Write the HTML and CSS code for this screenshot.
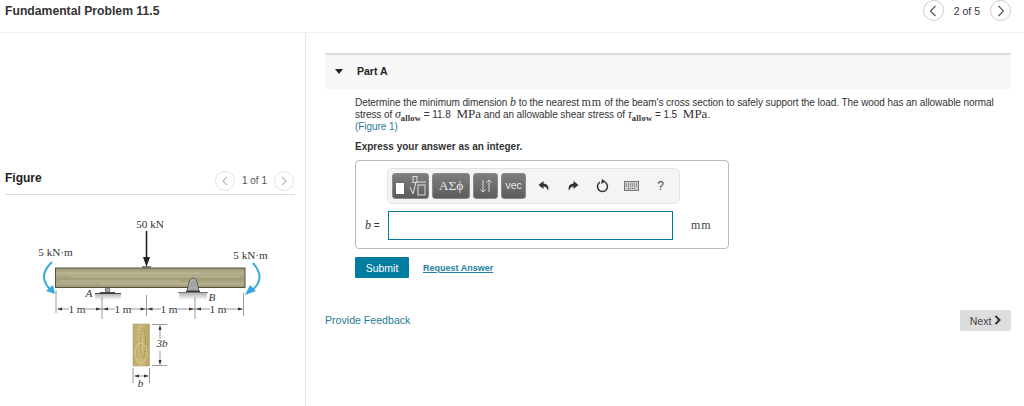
FILE: index.html
```html
<!DOCTYPE html>
<html lang="en">
<head>
    <meta charset="UTF-8">
    <title>Fundamental Problem 11.5</title>
    <link rel="stylesheet" href="styles.css">
</head>
<body>
    <header class="top-bar">
        <h1>Fundamental Problem 11.5</h1>
        <div class="pager">
            <span class="circle">
                <svg width="8" height="12" viewBox="0 0 8 12"><path d="M6.5 1 L1.5 6 L6.5 11" /></svg>
            </span>
            <span class="pager-text">2 of 5</span>
            <span class="circle">
                <svg width="8" height="12" viewBox="0 0 8 12"><path d="M1.5 1 L6.5 6 L1.5 11" /></svg>
            </span>
        </div>
    </header>

    <main class="columns">
        <!-- Figure pane -->
        <section class="figure-pane">
            <div class="figure-head">
                <h2>Figure</h2>
                <div class="pager small">
                    <span class="circle faded">
                        <svg width="8" height="12" viewBox="0 0 8 12"><path d="M6 2 L2 6 L6 10" /></svg>
                    </span>
                    <span class="pager-text">1 of 1</span>
                    <span class="circle faded">
                        <svg width="8" height="12" viewBox="0 0 8 12"><path d="M2 2 L6 6 L2 10" /></svg>
                    </span>
                </div>
            </div>
            <svg class="beam-figure" width="305" height="211" viewBox="0 195 305 211">
                <defs>
                    <linearGradient id="wood" x1="0" y1="0" x2="0" y2="1">
                        <stop offset="0" stop-color="#a09b76" />
                        <stop offset="0.3" stop-color="#b5b08e" />
                        <stop offset="0.55" stop-color="#a29d78" />
                        <stop offset="0.8" stop-color="#b0ab89" />
                        <stop offset="1" stop-color="#9b9671" />
                    </linearGradient>
                    <linearGradient id="grain" x1="0" y1="0" x2="1" y2="0">
                        <stop offset="0" stop-color="#bda869" />
                        <stop offset="0.5" stop-color="#cdbb80" />
                        <stop offset="1" stop-color="#b7a260" />
                    </linearGradient>
                    <linearGradient id="ground" x1="0" y1="0" x2="0" y2="1">
                        <stop offset="0" stop-color="#b5b5b5" />
                        <stop offset="1" stop-color="#fff" />
                    </linearGradient>
                </defs>

                <text class="fig-label" x="150" y="228" text-anchor="middle">50 kN</text>
                <text class="fig-label" x="55.5" y="256" text-anchor="middle">5 kN·m</text>
                <text class="fig-label" x="250.5" y="258.5" text-anchor="middle">5 kN·m</text>

                <!-- load arrow -->
                <rect x="142" y="266" width="9" height="2.5" fill="#8b8b80" />
                <path d="M146.5 231 V258" stroke="#222" stroke-width="1.6" fill="none" />
                <path d="M143 257 L150 257 L146.5 267 Z" fill="#222" />

                <!-- beam -->
                <rect x="55.5" y="268" width="189.5" height="19.5" fill="url(#wood)" stroke="#55533f" stroke-width="1" />
                <path d="M58 273 H200 M70 277 H240 M60 281 H180 M100 284 H243" stroke="#c4bf9f" stroke-width="0.7" fill="none" />

                <!-- moment arrows -->
                <path d="M52 262 Q36 277 52 291" stroke="#35a7dc" stroke-width="2" fill="none" />
                <path d="M55 294 L46 291 L53 285 Z" fill="#35a7dc" />
                <path d="M253 263 Q267 279 251 291" stroke="#35a7dc" stroke-width="2" fill="none" />
                <path d="M245 295 L250 285 L256 291 Z" fill="#35a7dc" />

                <!-- support A -->
                <circle cx="107.5" cy="290" r="2.3" fill="#aaa" stroke="#444" stroke-width="0.7" />
                <rect x="100" y="292" width="15" height="1.5" fill="#444" />
                <path d="M95 293.5 H121" stroke="#444" stroke-width="1" />
                <rect x="95" y="294" width="26" height="6" fill="url(#ground)" />
                <text class="fig-label italic" x="89" y="297" text-anchor="middle">A</text>

                <!-- support B -->
                <path d="M187 291 L189.5 280 Q193 276 196.5 280 L199 291 Z" fill="#a8a8a8" stroke="#444" stroke-width="0.7" />
                <circle cx="193" cy="284" r="1.2" fill="#eee" stroke="#444" stroke-width="0.5" />
                <path d="M186 291.5 H200" stroke="#333" stroke-width="1.4" />
                <path d="M178 292.5 H208" stroke="#777" stroke-width="1" />
                <rect x="179" y="293" width="28" height="7" fill="url(#ground)" />
                <text class="fig-label italic" x="212" y="301" text-anchor="middle">B</text>

                <!-- dimension line -->
                <g class="dim">
                    <path d="M56 290 V313 M102 297 V319 M146.5 295 V316 M195 297 V319 M243.5 293 V316" />
                    <path d="M58 309 H69 M85 309 H115 M131 309 H161 M177 309 H210 M226 309 H242" />
                </g>
                <g class="dim-head">
                    <path d="M57 309 L62 307.5 V310.5 Z M101 309 L96 307.5 V310.5 Z M103 309 L108 307.5 V310.5 Z M145.5 309 L140.5 307.5 V310.5 Z M147.5 309 L152.5 307.5 V310.5 Z M194 309 L189 307.5 V310.5 Z M196 309 L201 307.5 V310.5 Z M243 309 L238 307.5 V310.5 Z" />
                </g>
                <text class="fig-label" x="77" y="313" text-anchor="middle">1 m</text>
                <text class="fig-label" x="123" y="313" text-anchor="middle">1 m</text>
                <text class="fig-label" x="169" y="313" text-anchor="middle">1 m</text>
                <text class="fig-label" x="218" y="313" text-anchor="middle">1 m</text>

                <!-- cross section -->
                <rect x="133" y="324" width="16.5" height="42" fill="url(#grain)" stroke="#a89a68" stroke-width="0.5" />
                <ellipse cx="143" cy="343" rx="2.5" ry="15" fill="none" stroke="#8f7b3c" stroke-width="0.7" stroke-dasharray="2 1.5" />
                <ellipse cx="141" cy="353" rx="6" ry="10" fill="none" stroke="#e2d49a" stroke-width="0.7" />
                <g class="dim">
                    <path d="M152 324.5 H167 M152 365.5 H167 M133 368 V383 M149.5 368 V383" />
                    <path d="M160 326 V339 M160 351 V364 M135 376 H148" />
                </g>
                <g class="dim-head">
                    <path d="M160 325 L158.5 330 H161.5 Z M160 365 L158.5 360 H161.5 Z M134 376 L139 374.5 V377.5 Z M149 376 L144 374.5 V377.5 Z" />
                </g>
                <text class="fig-label italic" x="162" y="347" text-anchor="middle">3b</text>
                <text class="fig-label italic" x="140.5" y="387" text-anchor="middle">b</text>
            </svg>
        </section>

        <!-- Question pane -->
        <section class="question-pane">
            <div class="part-head">
                <span class="caret"></span>
                <h3>Part A</h3>
            </div>
            <div class="part-body">
                <p class="prompt">Determine the minimum dimension <i class="math">b</i> to the nearest <span class="math unit">mm</span> of the beam's cross section to safely support the load. The wood has an allowable normal<br>stress of <i class="math">σ</i><sub class="math">allow</sub> = 11.8 <span class="math unit big">MPa</span> and an allowable shear stress of <i class="math">τ</i><sub class="math">allow</sub> = 1.5 <span class="math unit big">MPa</span>.<br><a class="figure-link">(Figure 1)</a></p>
                <p class="hint">Express your answer as an integer.</p>

                <div class="answer-box">
                    <div class="toolbar">
                        <span class="tool wide">
                            <svg width="31" height="22" viewBox="0 0 31 22">
                                <rect x="1" y="8" width="8" height="11" fill="#fff" />
                                <rect x="18" y="1.5" width="4" height="6" fill="none" stroke="#ddd" stroke-width="1" />
                                <path d="M15 12 L18 19 L21 7 H31" fill="none" stroke="#ddd" stroke-width="1" />
                                <rect x="23" y="10" width="7" height="10" fill="none" stroke="#ddd" stroke-width="1" />
                            </svg>
                        </span>
                        <span class="tool greek">ΑΣϕ</span>
                        <span class="tool narrow">
                            <svg width="14" height="14" viewBox="0 0 14 14">
                                <path d="M4 1 V13 M1.5 10.5 L4 13 L6.5 10.5 M10 13 V1 M7.5 3.5 L10 1 L12.5 3.5" fill="none" stroke="#d8d8d8" stroke-width="1" />
                            </svg>
                        </span>
                        <span class="tool vec">vec</span>
                        <span class="plain-icons">
                            <svg width="12" height="12" viewBox="0 0 12 12"><path d="M5.5 1 L0.5 5 L5.5 9 V6.5 Q9 6.5 10 11 Q12 4 5.5 3.5 Z" fill="#333" /></svg>
                            <svg width="12" height="12" viewBox="0 0 12 12"><path d="M6.5 1 L11.5 5 L6.5 9 V6.5 Q3 6.5 2 11 Q0 4 6.5 3.5 Z" fill="#333" /></svg>
                            <svg width="13" height="14" viewBox="0 0 13 14"><path d="M4 3.2 A5 5 0 1 0 9 3.2" fill="none" stroke="#333" stroke-width="1.5" /><path d="M5.5 0 V5 L9.5 2 Z" fill="#333" transform="rotate(8 6 3)" /></svg>
                            <svg width="15" height="10" viewBox="0 0 15 10"><rect x="0.5" y="0.5" width="14" height="9" fill="#ccc" stroke="#777" /><path d="M2 3 H13 M2 5 H13 M4 7.5 H11" stroke="#666" stroke-width="1" stroke-dasharray="1 1" /></svg>
                            <span class="help">?</span>
                        </span>
                    </div>
                    <div class="answer-row">
                        <label class="answer-label"><i class="math">b</i> =</label>
                        <input class="answer-input" type="text">
                        <span class="math unit answer-unit">mm</span>
                    </div>
                </div>

                <div class="actions">
                    <button class="submit">Submit</button>
                    <a class="request">Request Answer</a>
                </div>
            </div>

            <div class="footer-row">
                <a class="feedback">Provide Feedback</a>
                <button class="next">Next <svg width="7" height="10" viewBox="0 0 7 10"><path d="M1.5 1 L5.5 5 L1.5 9" fill="none" stroke="#333" stroke-width="2" /></svg></button>
            </div>
        </section>
    </main>
</body>
</html>
```

FILE: styles.css
```css
* {
    box-sizing: border-box;
}

body {
    font-family: "Liberation Sans", Arial, sans-serif;
    margin: 0;
    padding: 0;
    background-color: #fff;
    color: #333;
    font-size: 10px;
    overflow: hidden;
}

.top-bar {
    display: flex;
    justify-content: space-between;
    align-items: center;
    height: 33px;
    padding: 0 13px 11px 5px;
    border-bottom: 1px solid #eee;
}

.top-bar h1 {
    margin: 0;
    font-size: 12.2px;
    font-weight: bold;
    color: #333;
}

.pager {
    display: flex;
    align-items: center;
    gap: 10px;
    font-size: 10.5px;
}

.circle {
    display: flex;
    align-items: center;
    justify-content: center;
    width: 21px;
    height: 21px;
    border: 1px solid #ccc;
    border-radius: 50%;
}

.circle svg path {
    fill: none;
    stroke: #4a5a66;
    stroke-width: 1.2;
}

.circle.faded {
    width: 20px;
    height: 20px;
    border-color: #e2e2e2;
}

.circle.faded svg path {
    stroke: #bbb;
}

.columns {
    display: flex;
    height: 373px;
}

.figure-pane {
    width: 306px;
    border-right: 1px solid #e4e8ee;
    padding-top: 134px;
    flex: none;
}

.figure-head {
    display: flex;
    justify-content: space-between;
    align-items: center;
    margin: 0 10px 0 5px;
    height: 28px;
    padding-bottom: 6px;
    border-bottom: 1px solid #ddd;
}

.figure-head h2 {
    margin: 0;
    font-size: 12px;
    font-weight: bold;
    color: #222;
}

.pager.small {
    gap: 7px;
    margin: 6px 1px 0 0;
    font-size: 10px;
    color: #555;
}

.beam-figure {
    display: block;
}

.fig-label {
    font-family: "Liberation Serif", serif;
    font-size: 11.2px;
    fill: #333;
}

.fig-label.italic {
    font-style: italic;
}

.dim path {
    fill: none;
    stroke: #555;
    stroke-width: 0.6;
}

.dim-head path {
    fill: #333;
}

.question-pane {
    flex: 1;
    padding: 20px 13px 0 19px;
}

.part-head {
    display: flex;
    align-items: center;
    height: 36px;
    border-top: 2px solid #ddd;
    background-color: #f7f7f7;
    padding: 0 0 1px 10px;
}

.part-head h3 {
    margin: 0 0 2px 14px;
    font-size: 10.5px;
    font-weight: bold;
    color: #222;
}

.caret {
    width: 0;
    height: 0;
    border-left: 4.5px solid transparent;
    border-right: 4.5px solid transparent;
    border-top: 5px solid #222;
}

.part-body {
    padding: 8px 0 0 30px;
}

.prompt {
    margin: 0;
    font-size: 10px;
    letter-spacing: -0.07px;
    line-height: 12px;
}

.math {
    font-family: "Liberation Serif", serif;
    line-height: 0;
}

i.math {
    font-size: 12px;
}

sub.math {
    font-size: 8.5px;
    font-weight: bold;
    letter-spacing: 0.2px;
    line-height: 0;
}

.unit {
    font-size: 12px;
    letter-spacing: 0.8px;
}

.unit.big {
    font-size: 13px;
    letter-spacing: 0;
    margin-left: 3px;
}

.figure-link {
    color: #2a7a96;
}

.hint {
    margin: 8px 0 0;
    font-weight: bold;
    color: #333;
}

.answer-box {
    width: 374px;
    height: 89px;
    margin-top: 8px;
    border: 1px solid #bbb;
    border-radius: 4px;
    padding: 7px 0 0 31px;
}

.toolbar {
    display: flex;
    align-items: center;
    gap: 3px;
    width: 293px;
    height: 36px;
    padding: 0 4px;
    background-color: #f4f4f4;
    border: 1px solid #e2e2e2;
    border-radius: 5px;
}

.tool {
    display: flex;
    align-items: center;
    justify-content: center;
    height: 26px;
    border-radius: 3px;
    border: 1px solid #8a8a8a;
    background: linear-gradient(#7e7e7e, #5c5c5c);
    color: #e8e8e8;
}

.tool.wide {
    width: 38px;
}

.tool.greek {
    width: 38px;
    font-family: "Liberation Serif", serif;
    font-size: 13.5px;
}

.tool.narrow {
    width: 26px;
}

.tool.vec {
    width: 25px;
    font-size: 10.5px;
    padding-bottom: 3px;
}

.plain-icons {
    display: grid;
    grid-template-columns: repeat(5, 29px);
    justify-items: center;
    align-items: center;
    margin-left: 1px;
}

.help {
    font-size: 12px;
    color: #444;
}

.answer-row {
    display: flex;
    align-items: center;
    margin: 7px 0 0 -22px;
}

.answer-label {
    width: 23px;
    font-size: 10px;
}

.answer-input {
    width: 285px;
    height: 29px;
    border: 1px solid #007c9e;
    background-color: #fff;
    padding: 0;
}

.answer-unit {
    margin-left: 18px;
    padding-bottom: 2px;
    color: #444;
}

.actions {
    display: flex;
    align-items: center;
    margin-top: 8px;
}

.submit {
    width: 54px;
    height: 21px;
    padding: 0;
    border: none;
    border-radius: 1px;
    background-color: #007c9e;
    color: #fff;
    font-family: inherit;
    font-size: 10.5px;
}

.request {
    margin-left: 14px;
    color: #1f7f9f;
    font-size: 9px;
    font-weight: bold;
    text-decoration: underline;
}

.footer-row {
    display: flex;
    justify-content: space-between;
    align-items: center;
    margin-top: 32px;
}

.feedback {
    color: #2a7a96;
    font-size: 10.6px;
    margin-bottom: 2px;
}

.next {
    width: 51px;
    height: 21px;
    padding: 0;
    border: none;
    border-radius: 2px;
    background-color: #ddd;
    color: #444;
    font-family: inherit;
    font-size: 10.5px;
}
```
